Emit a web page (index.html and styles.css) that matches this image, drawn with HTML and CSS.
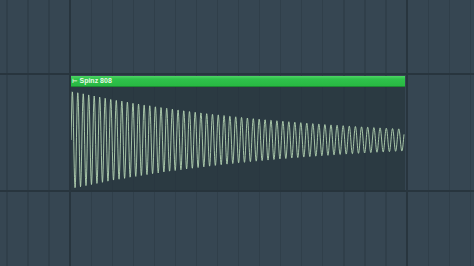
FILE: index.html
```html
<!DOCTYPE html>
<html lang="en">
<head>
    <meta charset="UTF-8">
    <title>Playlist - Spinz 808</title>
    <link rel="stylesheet" href="styles.css">
</head>
<body>
    <div class="playlist">
        <div class="track track-top"></div>
        <div class="track track-main">
            <div class="clip">
                <div class="clip-header">
                    <span class="clip-icon">&#8866;</span>
                    <span class="clip-name">Spinz 808</span>
                </div>
                <div class="clip-body">
                    <svg id="wave" class="wave" width="335" height="105" viewBox="0 0 335 105">
                        <polyline id="wavePath" points=""></polyline>
                    </svg>
                </div>
            </div>
        </div>
        <div class="track track-bottom"></div>
    </div>

    <script>
        // decaying sine for the 808 sample
        const poly = document.getElementById('wavePath');
        const pts = [];
        const mid = 53;
        for (let x = 1; x <= 334; x += 0.25) {
            const amp = 49 * Math.exp(-0.0045 * x);
            const period = 5.45 + x * 0.0012;
            const y = mid - amp * Math.sin((2 * Math.PI * x) / period);
            pts.push(x.toFixed(2) + ',' + y.toFixed(2));
        }
        poly.setAttribute('points', '0,' + mid + ' ' + pts.join(' '));
    </script>
</body>
</html>
```

FILE: styles.css
```css
html, body {
    margin: 0;
    height: 100%;
}
body {
    background-color: #364652;
    font-family: "Liberation Sans", Arial, sans-serif;
    overflow: hidden;
}
.playlist {
    display: flex;
    flex-direction: column;
    height: 266px;
    background-image:
        linear-gradient(to right, transparent 69px, #28353e 69px, #28353e 71px, transparent 71px),
        linear-gradient(to right, transparent 406px, #28353e 406px, #28353e 408px, transparent 408px),
        repeating-linear-gradient(to right, transparent 0, transparent 6.3px, #303f4a 6.3px, #303f4a 7.6px, transparent 7.6px, transparent 21.06px);
}
.track {
    border-bottom: 2px solid #28353e;
}
.track-top {
    height: 73px;
}
.track-main {
    height: 114px;
    padding-top: 1px;
}
.track-bottom {
    flex: 1;
    border-bottom: none;
}
.clip {
    margin-left: 71px;
    width: 334px;
    height: 114px;
    display: flex;
    flex-direction: column;
}
.clip-header {
    height: 10px;
    background: linear-gradient(#4fd466, #2fc24b 30%, #28b843);
    border-bottom: 1px solid #1d8a32;
    display: flex;
    align-items: center;
    gap: 2px;
    padding-left: 1px;
    color: #e6f8e6;
    font-size: 7px;
    font-weight: bold;
    line-height: 10px;
}
.clip-icon {
    font-family: "DejaVu Sans", sans-serif;
    font-size: 6px;
}
.clip-body {
    flex: 1;
    background-color: rgba(38, 52, 60, 0.7);
    display: flex;
    align-items: center;
}
.wave {
    display: block;
}
.wave polyline {
    fill: none;
    stroke: #b5d5b3;
    stroke-width: 0.9;
}
```
